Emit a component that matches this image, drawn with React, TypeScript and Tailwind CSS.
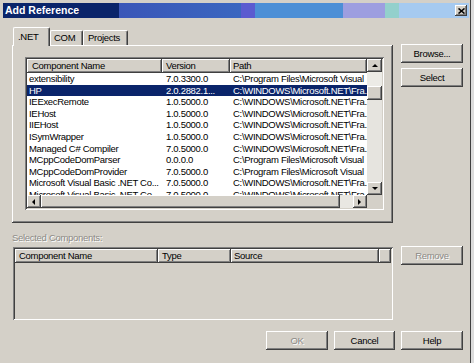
import React from "react";

type TRow = {
  name: string;
  version: string;
  path: string;
  selected?: boolean;
};

const PF = "C:\\Program Files\\Microsoft Visual";
const WIN = "C:\\WINDOWS\\Microsoft.NET\\Fra.";

const rows: TRow[] = [
  { name: "extensibility", version: "7.0.3300.0", path: PF },
  { name: "HP", version: "2.0.2882.1...", path: WIN, selected: true },
  { name: "IEExecRemote", version: "1.0.5000.0", path: WIN },
  { name: "IEHost", version: "1.0.5000.0", path: WIN },
  { name: "IIEHost", version: "1.0.5000.0", path: WIN },
  { name: "ISymWrapper", version: "1.0.5000.0", path: WIN },
  { name: "Managed C# Compiler", version: "7.0.5000.0", path: WIN },
  { name: "MCppCodeDomParser", version: "0.0.0.0", path: PF },
  { name: "MCppCodeDomProvider", version: "7.0.5000.0", path: PF },
  { name: "Microsoft Visual Basic .NET Co...", version: "7.0.5000.0", path: WIN },
  { name: "Microsoft Visual Basic .NET Co...", version: "7.0.5000.0", path: WIN },
];

const raised =
  "shadow-[inset_-1px_-1px_0_#404040,inset_1px_1px_0_#ffffff,inset_-2px_-2px_0_#808080,inset_2px_2px_0_#d4d0c8]";
const sunken =
  "shadow-[inset_1px_1px_0_#808080,inset_-1px_-1px_0_#ffffff,inset_2px_2px_0_#404040,inset_-2px_-2px_0_#d4d0c8]";
const headerCell =
  "shadow-[inset_-1px_-1px_0_#404040,inset_1px_1px_0_#ffffff,inset_-2px_-2px_0_#808080]";

function Button({ label, disabled, w = "w-[62px]" }: { label: string; disabled?: boolean; w?: string }) {
  return (
    <div className={`${w} h-[19px] bg-[#d4d0c8] ${raised} flex items-center justify-center text-[9.5px] leading-none`}>
      <span className={disabled ? "text-[#8c8a86] [text-shadow:1px_1px_0_#ffffff]" : "text-black"}>{label}</span>
    </div>
  );
}

function Arrow({ dir }: { dir: "up" | "down" | "left" | "right" }) {
  const pts = {
    up: "1,5 4,2 7,5",
    down: "1,2 4,5 7,2",
    left: "5,1 2,4 5,7",
    right: "2,1 5,4 2,7",
  }[dir];
  return (
    <svg width="8" height="8" viewBox="0 0 8 8">
      <polygon points={pts} fill="#000" />
    </svg>
  );
}

function ScrollBtn({ dir, cls }: { dir: "up" | "down" | "left" | "right"; cls: string }) {
  return (
    <div className={`${cls} bg-[#d4d0c8] ${raised} flex items-center justify-center shrink-0`}>
      <Arrow dir={dir} />
    </div>
  );
}

function ComponentList() {
  return (
    <div className={`w-[359px] h-[153px] p-[2px] bg-white ${sunken}`}>
      <div className="flex h-full">
        <div className="flex flex-col w-[340px] h-full">
          <div className="flex h-[14px] shrink-0 bg-[#d4d0c8] text-[9.5px] leading-[14px] whitespace-nowrap">
            <div className={`w-[135px] pl-[5px] ${headerCell}`}>Component Name</div>
            <div className={`w-[68px] pl-[4px] ${headerCell}`}>Version</div>
            <div className={`flex-1 pl-[3px] ${headerCell}`}>Path</div>
          </div>
          <div className="flex-1 min-h-0 overflow-hidden">
            {rows.map((r, i) => (
              <div
                key={i}
                className={`flex h-[11.6px] text-[9.5px] leading-[11.6px] whitespace-nowrap ${
                  r.selected ? "bg-[#0a246a] text-white" : "text-black"
                }`}
              >
                <div className="w-[135px] pl-[2px] overflow-hidden">{r.name}</div>
                <div className="w-[68px] pl-[4px] overflow-hidden">{r.version}</div>
                <div className="flex-1 pl-[3px] overflow-hidden">{r.path}</div>
              </div>
            ))}
          </div>
          <div className="flex h-[13px] shrink-0">
            <ScrollBtn dir="left" cls="w-[14px] h-[13px]" />
            <div className={`w-[299px] h-[13px] bg-[#d4d0c8] ${raised}`} />
            <div className="w-[13px] h-[13px] bg-[#e9e7e2]" />
            <ScrollBtn dir="right" cls="w-[14px] h-[13px]" />
          </div>
        </div>
        <div className="flex flex-col w-[15px] h-full">
          <ScrollBtn dir="up" cls="w-[15px] h-[13px]" />
          <div className="h-[14px] bg-[#ecebe6]" />
          <div className={`h-[14px] bg-[#d4d0c8] ${raised}`} />
          <div className="flex-1 bg-[#e6e4df]" />
          <ScrollBtn dir="down" cls="w-[15px] h-[13px]" />
          <div className="h-[13px] bg-[#d4d0c8]" />
        </div>
      </div>
    </div>
  );
}

function SelectedList() {
  return (
    <div className={`w-[380px] h-[73px] p-[2px] bg-[#d4d0c8] ${sunken}`}>
      <div className="flex h-[14px] text-[9.5px] leading-[14px] whitespace-nowrap">
        <div className={`w-[143px] pl-[4px] ${headerCell}`}>Component Name</div>
        <div className={`w-[73px] pl-[4px] ${headerCell}`}>Type</div>
        <div className={`w-[148px] pl-[3px] ${headerCell}`}>Source</div>
        <div className={`flex-1 ${headerCell}`} />
      </div>
    </div>
  );
}

function Tabs() {
  return (
    <div className="flex items-end h-[18px] pl-[1px] text-[9.5px]">
      <div className="relative z-10 -mb-px w-[37px] h-[19px] bg-[#d4d0c8] border-t border-l border-white border-r border-r-[#404040] rounded-t-[2px] shadow-[inset_-1px_0_0_#808080] pl-[4px] pt-[3px] leading-[12px]">
        .NET
      </div>
      <div className="w-[33px] h-[15px] bg-[#d4d0c8] border-t border-l border-white border-r border-r-[#404040] rounded-t-[2px] shadow-[inset_-1px_0_0_#808080] pl-[3px] pt-[1px] leading-[12px]">
        COM
      </div>
      <div className="w-[45px] h-[15px] bg-[#d4d0c8] border-t border-l border-white border-r border-r-[#404040] rounded-t-[2px] shadow-[inset_-1px_0_0_#808080] pl-[4px] pt-[1px] leading-[12px]">
        Projects
      </div>
    </div>
  );
}

export default function App() {
  return (
    <div className="flex w-[474px] h-[363px] overflow-hidden bg-[#d4d0c8] font-['Liberation_Sans',Arial,sans-serif] tracking-[-0.3px] text-black">
      <div className="w-[471px] h-full pl-[3px] pr-[1px] pt-[3px] border-r border-[#404040] bg-[#d4d0c8]">
        {/* title bar */}
        <div className="flex items-center justify-between h-[15px] bg-[linear-gradient(to_right,#0a246a_0%,#0a246a_25%,#3a56b8_25%,#3a66c0_51%,#5b5bd0_51%,#5b5bd0_54%,#4c8fd6_54%,#4c8fd6_73%,#9d9ee0_73%,#9d9ee0_82%,#93d0cc_82%,#93d0cc_85%,#a6caf0_85%)] pl-[2px] pr-[2px]">
          <span className="text-white font-bold text-[10.5px] leading-none tracking-[0px]">Add Reference</span>
          <div className={`w-[12px] h-[11px] bg-[#d4d0c8] ${raised} flex items-center justify-center`}>
            <svg width="7" height="6" viewBox="0 0 7 6">
              <path d="M0.5 0.5 L6.5 5.5 M6.5 0.5 L0.5 5.5" stroke="#000" strokeWidth="1.6" />
            </svg>
          </div>
        </div>

        <div className="pl-[9px] pt-[9px]">
          <div className="flex">
            <div className="w-[381px]">
              <Tabs />
              <div className={`h-[178px] pl-[13px] pt-[12px] bg-[#d4d0c8] ${raised}`}>
                <ComponentList />
              </div>
            </div>
            <div className="ml-[8px] pt-[17px] flex flex-col gap-[5px]">
              <Button label="Browse..." />
              <Button label="Select" />
            </div>
          </div>

          <div className="h-[24px] pt-[9px] text-[9.5px] leading-[12px] text-[#8c8a86] [text-shadow:1px_1px_0_#ffffff]">
            Selected Components:
          </div>

          <div className="flex">
            <div className="ml-[1px]">
              <SelectedList />
            </div>
            <div className="ml-[8px] -mt-px">
              <Button label="Remove" disabled />
            </div>
          </div>

          <div className="flex justify-end gap-[6px] w-[451px] mt-[11px]">
            <Button label="OK" disabled />
            <Button label="Cancel" w="w-[61px]" />
            <Button label="Help" />
          </div>
        </div>
      </div>
      <div className="flex-1 h-full bg-[#dcdcdc]" />
    </div>
  );
}
